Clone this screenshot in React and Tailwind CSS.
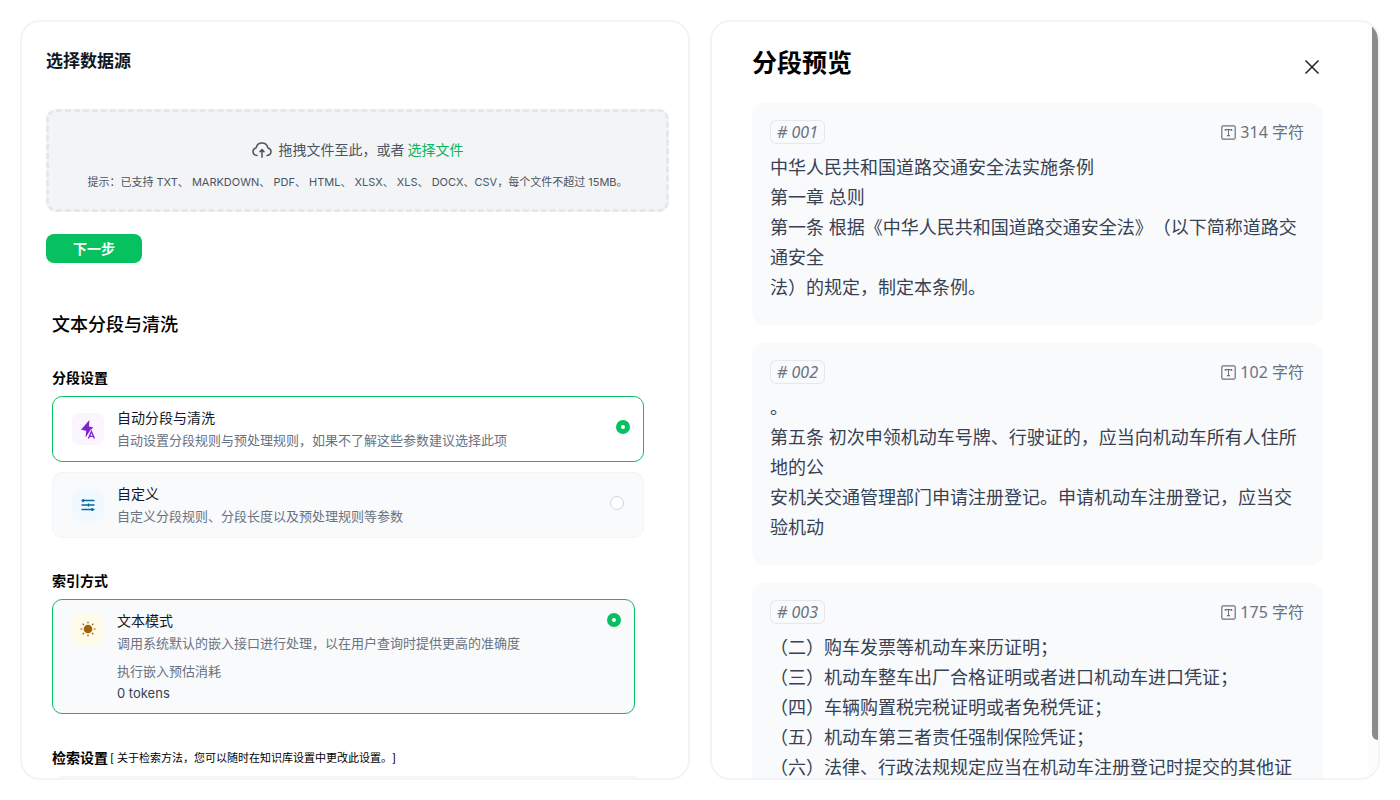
import { useState } from "react";

const segments = [
  {
    id: "001",
    count: 314,
    text: "中华人民共和国道路交通安全法实施条例\n第一章 总则\n第一条 根据《中华人民共和国道路交通安全法》（以下简称道路交通安全\n法）的规定，制定本条例。",
  },
  {
    id: "002",
    count: 102,
    text: "。\n第五条 初次申领机动车号牌、行驶证的，应当向机动车所有人住所地的公\n安机关交通管理部门申请注册登记。申请机动车注册登记，应当交验机动",
  },
  {
    id: "003",
    count: 175,
    text: "（二）购车发票等机动车来历证明；\n（三）机动车整车出厂合格证明或者进口机动车进口凭证；\n（四）车辆购置税完税证明或者免税凭证；\n（五）机动车第三者责任强制保险凭证；\n（六）法律、行政法规规定应当在机动车注册登记时提交的其他证",
  },
];

const radioStyle =
  "appearance-none shrink-0 w-[14px] h-[14px] rounded-full bg-white border border-gray-300 checked:border-[5px] checked:border-[#07c160]";

function CloudIcon() {
  return (
    <svg width="20" height="16" viewBox="0 0 20 16" fill="none" stroke="#4b5563" strokeWidth="1.5" strokeLinecap="round" strokeLinejoin="round">
      <path d="M5 13.5C2.6 13.3 1 11.7 1 9.6C1 7.7 2.3 6.3 4.1 5.9C4.8 3 7 1 10 1C13 1 15.2 3 15.9 5.9C17.7 6.3 19 7.7 19 9.6C19 11.7 17.4 13.3 15 13.5" />
      <path d="M10 15.2V8M8 9.6L10 7.6L12 9.6" />
    </svg>
  );
}

function BoltIcon() {
  return (
    <svg width="14" height="19" viewBox="0 0 14 19" fill="none">
      <path d="M8.4 0L0 9.8L5.2 10.8L4.6 17.6L9.4 10L12.4 7.6L8 6.6Z" fill="#7e22ce" />
      <path d="M7.4 18.4L10.4 11.4L13.4 18.4M8.4 16.4H12.4" stroke="#7e22ce" strokeWidth="1.3" />
    </svg>
  );
}

function SlidersIcon() {
  return (
    <svg width="14" height="13" viewBox="0 0 14 13" fill="none" stroke="#0369a1" strokeWidth="1.5">
      <path d="M0.5 1.5H13.5M0.5 6H13.5M0.5 10.5H13.5" />
      <path d="M2.2 0V3.2M7.5 4.4V7.6M11.2 8.9V12.1" />
    </svg>
  );
}

function SunIcon() {
  return (
    <svg width="16" height="16" viewBox="0 0 16 16" fill="none" stroke="#a16207" strokeWidth="1.2">
      <circle cx="8" cy="8" r="4.3" fill="#a16207" stroke="none" />
      <path d="M8 0.4V2.4M8 13.6V15.6M0.4 8H2.4M13.6 8H15.6M2.6 2.6L4 4M12 12L13.4 13.4M2.6 13.4L4 12M12 4L13.4 2.6" />
    </svg>
  );
}

function TextIcon() {
  return (
    <svg width="15" height="15" viewBox="0 0 15 15" fill="none" stroke="#6b7280">
      <rect x="0.8" y="0.8" width="13.4" height="13.4" rx="1.5" strokeWidth="1.2" />
      <path d="M4.3 6V4.6H10.7V6M7.5 4.6V10.6M6 10.6H9" strokeWidth="1.1" />
    </svg>
  );
}

function SegmentCard({ segment }) {
  return (
    <article className="rounded-xl bg-gray-50 pt-[17px] pr-[19px] pb-[22px] pl-[18px]">
      <div className="flex items-center justify-between text-base text-gray-500">
        <span className="rounded-md border border-gray-200 px-[6px] leading-[22px] italic">
          # {segment.id}
        </span>
        <span className="flex items-center gap-1 leading-[22px]">
          <TextIcon />
          {segment.count} 字符
        </span>
      </div>
      <p className="mt-2 mb-px text-[18px] leading-[30px] whitespace-pre-line text-gray-700">{segment.text}</p>
    </article>
  );
}

export default function App() {
  const [mode, setMode] = useState("auto");

  return (
    <div className="grid h-screen grid-cols-2 grid-rows-1 gap-5 overflow-hidden bg-white p-5 [text-spacing-trim:space-all]">
      <section className="min-w-0 overflow-hidden rounded-[20px] border-2 border-gray-100 pt-[27px] pr-[19px] pl-6 font-['Inter','Noto_Sans_CJK_SC',sans-serif]">
        <h2 className="text-[17px] leading-6 font-bold text-gray-900">选择数据源</h2>

        <div className="mt-9 rounded-[10px] border-[3px] border-dashed border-gray-200 bg-gray-100 pt-7 pb-[17px] text-center text-gray-600">
          <div className="flex items-center justify-center text-[14px] leading-5">
            <CloudIcon />
            <span className="ml-[7px]">拖拽文件至此，或者</span>
            <button className="ml-[3px] text-[#07b45a]">选择文件</button>
          </div>
          <p className="mt-3 text-[11px] leading-5">
            提示：已支持 TXT、 MARKDOWN、 PDF、 HTML、 XLSX、 XLS、 DOCX、CSV，每个文件不超过 15MB。
          </p>
        </div>

        <button className="mt-[22px] block h-[29px] w-24 rounded-lg bg-[#07c160] text-[14px] leading-5 font-bold text-white">
          下一步
        </button>

        <div className="mt-[50px] pr-[25px] pl-[6px]">
          <h2 className="text-[18px] leading-6 font-medium text-black">文本分段与清洗</h2>

          <h3 className="mt-[31px] text-[14px] leading-5 font-bold text-black">分段设置</h3>
          <label className="mt-2 flex h-[66px] items-center rounded-[10px] border border-[#07c160] pr-[13px] pl-[19px]">
            <span className="flex h-8 w-8 items-center justify-center rounded-lg bg-purple-50">
              <BoltIcon />
            </span>
            <span className="ml-[13px] flex-1">
              <span className="block text-[14px] leading-[22px] text-gray-900">自动分段与清洗</span>
              <span className="block text-[13px] leading-[22px] text-gray-500">
                自动设置分段规则与预处理规则，如果不了解这些参数建议选择此项
              </span>
            </span>
            <input type="radio" name="mode" className={`${radioStyle} mb-[5px]`} checked={mode === "auto"} onChange={() => setMode("auto")} />
          </label>

          <label className="mt-[10px] flex h-[66px] items-center rounded-[10px] border border-gray-100 bg-gray-50 pr-[19px] pl-[19px]">
            <span className="flex h-8 w-8 items-center justify-center rounded-lg bg-sky-50">
              <SlidersIcon />
            </span>
            <span className="ml-[13px] flex-1">
              <span className="block text-[14px] leading-[22px] text-gray-900">自定义</span>
              <span className="block text-[13px] leading-[22px] text-gray-500">
                自定义分段规则、分段长度以及预处理规则等参数
              </span>
            </span>
            <input type="radio" name="mode" className={`${radioStyle} mb-[5px]`} checked={mode === "custom"} onChange={() => setMode("custom")} />
          </label>

          <h3 className="mt-[33px] text-[14px] leading-5 font-bold text-black">索引方式</h3>
          <label className="mt-2 mr-[9px] flex items-start rounded-[10px] border border-[#07c160] bg-gray-50 pt-[10px] pr-[13px] pb-[9px] pl-[19px]">
            <span className="mt-[3px] flex h-8 w-8 items-center justify-center rounded-lg bg-yellow-50">
              <SunIcon />
            </span>
            <span className="ml-[13px] flex-1">
              <span className="block text-[14px] leading-[22px] text-gray-900">文本模式</span>
              <span className="block text-[13px] leading-[22px] text-gray-500">
                调用系统默认的嵌入接口进行处理，以在用户查询时提供更高的准确度
              </span>
              <span className="mt-[6px] block text-[13px] leading-[22px] text-gray-500">执行嵌入预估消耗</span>
              <span className="block text-[13px] leading-[22px] text-gray-700">0 tokens</span>
            </span>
            <input type="radio" name="index" className={`${radioStyle} mt-[3px]`} defaultChecked />
          </label>

          <div className="mt-[34px] flex items-center leading-5 text-black">
            <h3 className="text-[14px] font-bold">检索设置</h3>
            <p className="ml-[2px] text-[11px]">[ 关于检索方法，您可以随时在知识库设置中更改此设置。]</p>
          </div>
          <div className="mt-2 h-16 rounded-[10px] border border-gray-100 bg-gray-50" />
        </div>
      </section>

      <section className="flex min-w-0 overflow-hidden rounded-[20px] border-2 border-gray-100 font-['Noto_Sans','Noto_Sans_CJK_SC',sans-serif]">
        <div className="min-w-0 flex-1 pt-5 pr-[45px] pl-10">
          <header className="flex items-center justify-between">
            <h1 className="text-[25px] leading-10 font-bold text-black">分段预览</h1>
            <button aria-label="关闭" className="mt-[10px] mr-1">
              <svg width="14" height="14" viewBox="0 0 14 14" stroke="#222" strokeWidth="1.5">
                <path d="M0.5 0.5L13.5 13.5M13.5 0.5L0.5 13.5" />
              </svg>
            </button>
          </header>
          <div className="mt-[21px] flex flex-col gap-[18px]">
            {segments.map(s => (
              <SegmentCard key={s.id} segment={s} />
            ))}
          </div>
        </div>
        <div className="flex w-[10px] justify-end bg-[#fcfcfc]">
          <div className="h-[95%] w-[6px] rounded-l-md bg-[#8b8b8b]" />
        </div>
      </section>
    </div>
  );
}
